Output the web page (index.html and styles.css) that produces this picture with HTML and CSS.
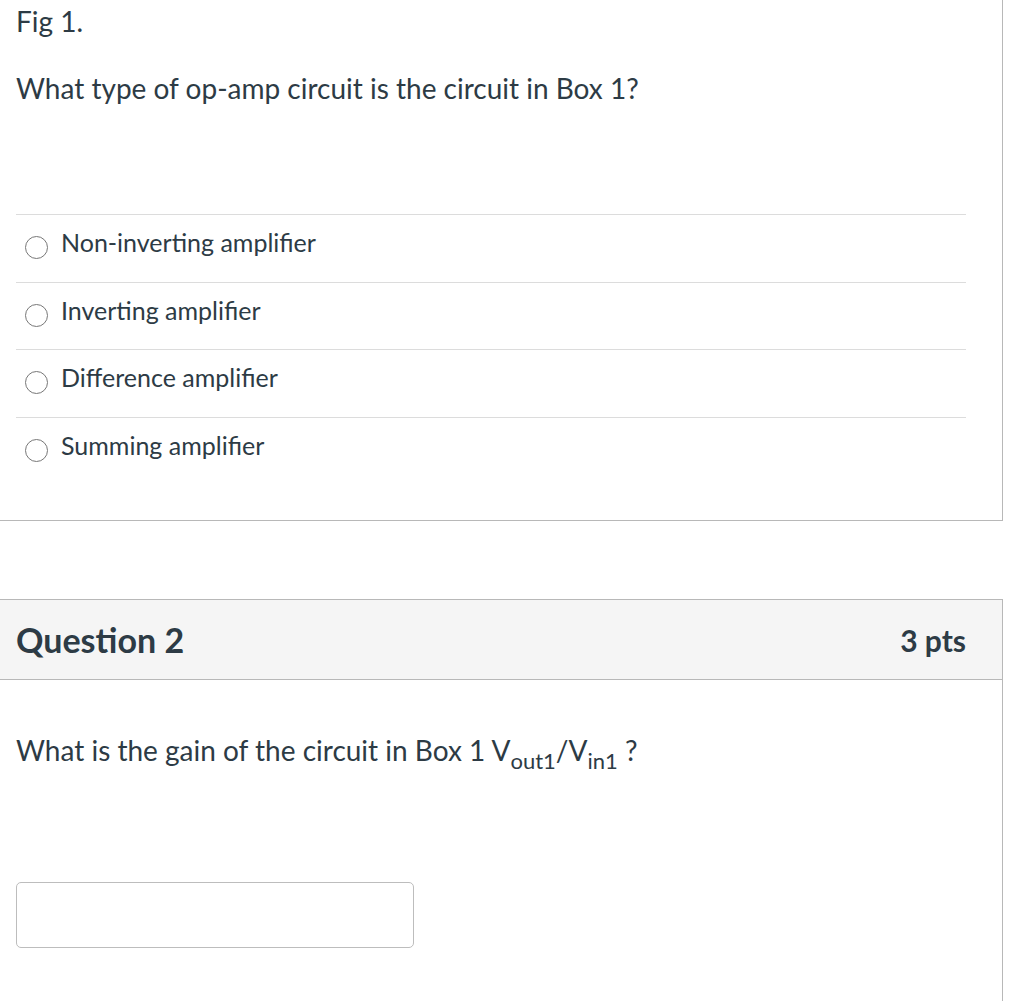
FILE: index.html
```html
<!DOCTYPE html>
<html>
<head>
<meta charset="utf-8">
<link rel="stylesheet" href="styles.css">
</head>
<body>
<div class="quiz">
  <section class="card card-first">
    <div class="card-body">
      <p class="fig">Fig 1.</p>
      <p class="prompt">What type of op-amp circuit is the circuit in Box 1?</p>
      <div class="answers">
        <label class="answer"><span class="radio"></span><span class="answer-text">Non-inverting amplifier</span></label>
        <label class="answer"><span class="radio"></span><span class="answer-text">Inverting amplifier</span></label>
        <label class="answer"><span class="radio"></span><span class="answer-text">Difference amplifier</span></label>
        <label class="answer"><span class="radio"></span><span class="answer-text">Summing amplifier</span></label>
      </div>
    </div>
  </section>
  <section class="card card-second">
    <header class="card-header">
      <h2 class="q-title">Question 2</h2>
      <span class="q-points">3 pts</span>
    </header>
    <div class="card-body2">
      <p class="prompt2">What is the gain of the circuit in Box 1 V<sub>out1</sub>/V<sub>in1</sub> ?</p>
      <div class="input-box"></div>
    </div>
  </section>
</div>
</body>
</html>
```
FILE: styles.css
```css
html, body {
  margin: 0;
  padding: 0;
  background: #ffffff;
}
body {
  font-family: Lato, "Open Sans", sans-serif;
  color: #2d3b45;
  font-size: 28px;
}
.quiz {
  margin-left: -1px;
  width: 1004px;
}
.card {
  box-sizing: border-box;
  border: 1px solid #b8b8b8;
}
.card-first {
  border-top: none;
}
.card-body {
  padding: 1px 36px 35.3px 16px;
}
.fig, .prompt, .prompt2 {
  margin: 0;
  line-height: 40px;
}
.prompt {
  margin-top: 27px;
}
.answers {
  margin-top: 106px;
}
.answer {
  display: flex;
  align-items: flex-start;
  border-top: 1px solid #dcdcdc;
  padding: 10px 0 21.7px 0;
  font-size: 25px;
}
.radio {
  box-sizing: border-box;
  width: 23px;
  height: 23px;
  border-radius: 50%;
  border: 1.5px solid #777777;
  margin: 11px 13px 0 9px;
  flex: none;
}
.answer-text {
  line-height: 35px;
}
.card-second {
  margin-top: 78px;
  border-bottom: none;
}
.card-header {
  display: flex;
  justify-content: space-between;
  align-items: center;
  background: #f5f5f5;
  border-bottom: 1px solid #b8b8b8;
  height: 79px;
  padding: 0 36px 0 16px;
}
.q-title {
  margin: 0;
  font-size: 34px;
  font-weight: 700;
}
.q-points {
  font-size: 30px;
  font-weight: 700;
}
.card-body2 {
  padding: 50px 16px 60px 16px;
}
.prompt2 sub {
  font-size: 22px;
  vertical-align: -8px;
  line-height: 0;
}
.input-box {
  margin-top: 112px;
  width: 398px;
  height: 66px;
  box-sizing: border-box;
  border: 1px solid #bdbdbd;
  border-radius: 5px;
}
```
